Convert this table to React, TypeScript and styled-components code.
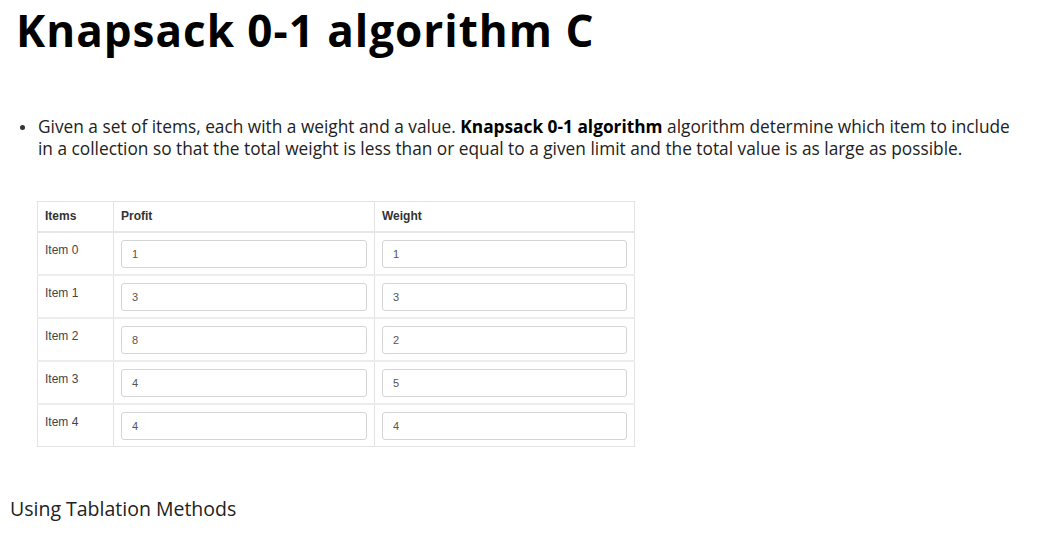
import React from "react";
import styled, { createGlobalStyle } from "styled-components";

const Global = createGlobalStyle`
  html, body { margin: 0; padding: 0; background: #ffffff; }
  body { font-family: "Open Sans", "Noto Sans", sans-serif; color: #1a1a1a; }
`;

const Page = styled.div`
  width: 1061px;
  height: 533px;
  overflow: hidden;
  display: flex;
  flex-direction: column;
  box-sizing: border-box;
`;

const Title = styled.h1`
  margin: 0;
  padding: 2px 0 0 16px;
  font-family: "Open Sans", sans-serif;
  font-weight: 700;
  font-size: 44px;
  letter-spacing: 1px;
  line-height: 56px;
  color: #000;
`;

const Bullets = styled.ul`
  margin: 58px 0 0 0;
  padding: 0 0 0 38px;
  list-style: none;
`;

const Bullet = styled.li`
  position: relative;
  font-family: "Open Sans", sans-serif;
  font-size: 17.3px;
  line-height: 22px;
  color: #222;
  &::before {
    content: "";
    position: absolute;
    left: -18px;
    top: 9px;
    width: 5px;
    height: 5px;
    border-radius: 50%;
    background: #333;
  }
  b { font-weight: 700; color: #000; }
`;

const Table = styled.table`
  margin: 41px 0 0 37px;
  border-collapse: collapse;
  font-family: "Liberation Sans", Arial, sans-serif;
  font-size: 12px;
  color: #333;
  border: 1px solid #e3e3e3;
  table-layout: fixed;
  width: 597px;
`;

const Th = styled.th<{ $w: number }>`
  width: ${(p) => p.$w}px;
  height: 30px;
  box-sizing: border-box;
  padding: 0 7px;
  text-align: left;
  font-weight: 700;
  color: #333;
  border: 1px solid #e3e3e3;
  border-bottom: 2px solid #e6e6e6;
  vertical-align: middle;
`;

const Td = styled.td`
  box-sizing: border-box;
  padding: 7px 7px 6px 7px;
  vertical-align: top;
  border: 1px solid #e3e3e3;
  border-top: 2px solid #ececec;
`;

const Label = styled.span`
  display: block;
  padding-top: 3px;
  color: #444;
`;

const Field = styled.input`
  display: block;
  width: 100%;
  height: 28px;
  box-sizing: border-box;
  border: 1px solid #d4d4d4;
  border-radius: 3px;
  padding: 0 10px;
  font-family: "Liberation Sans", Arial, sans-serif;
  font-size: 11px;
  color: #555;
  background: #fff;
  outline: none;
`;

const Footer = styled.p`
  margin: 49px 0 0 10px;
  font-family: "Open Sans", sans-serif;
  font-size: 19.5px;
  line-height: 26px;
  color: #222;
`;

const rows = [
  { name: "Item 0", profit: "1", weight: "1" },
  { name: "Item 1", profit: "3", weight: "3" },
  { name: "Item 2", profit: "8", weight: "2" },
  { name: "Item 3", profit: "4", weight: "5" },
  { name: "Item 4", profit: "4", weight: "4" },
];

export default function App() {
  return (
    <Page>
      <Global />
      <Title>Knapsack 0-1 algorithm C</Title>
      <Bullets>
        <Bullet>
          Given a set of items, each with a weight and a value. <b>Knapsack 0-1 algorithm</b> algorithm determine which item to include
          <br />
          in a collection so that the total weight is less than or equal to a given limit and the total value is as large as possible.
        </Bullet>
      </Bullets>
      <Table>
        <thead>
          <tr>
            <Th $w={76}>Items</Th>
            <Th $w={261}>Profit</Th>
            <Th $w={260}>Weight</Th>
          </tr>
        </thead>
        <tbody>
          {rows.map((r) => (
            <tr key={r.name}>
              <Td><Label>{r.name}</Label></Td>
              <Td><Field defaultValue={r.profit} /></Td>
              <Td><Field defaultValue={r.weight} /></Td>
            </tr>
          ))}
        </tbody>
      </Table>
      <Footer>Using Tablation Methods</Footer>
    </Page>
  );
}
